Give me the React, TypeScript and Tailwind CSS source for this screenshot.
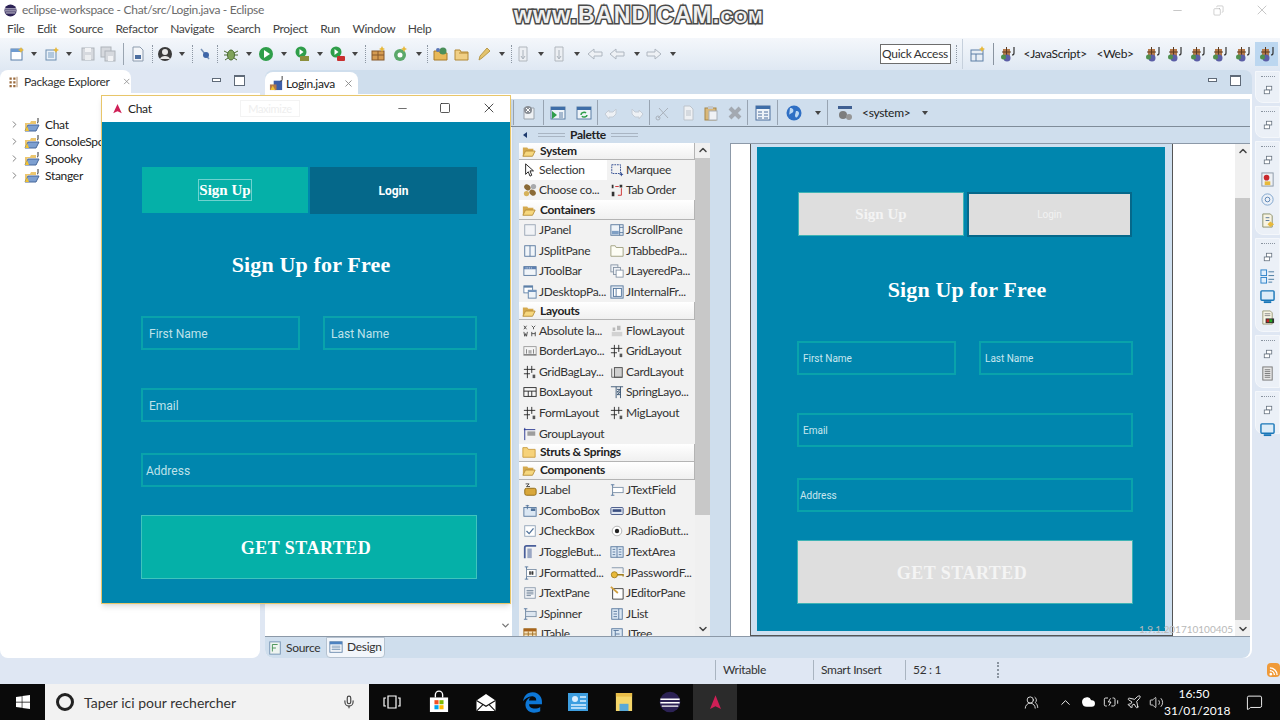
import { ChevronDown, ChevronRight, ChevronUp, Cloud, Mic, Minus, Plane, Square, Volume2, X, MessageSquare, UsersRound, BatteryCharging, Copy } from "lucide-react";
import { FaWindows } from "react-icons/fa";
import { FaEdgeLegacy } from "react-icons/fa6";
import type { ReactNode } from "react";

const menus = ["File", "Edit", "Source", "Refactor", "Navigate", "Search", "Project", "Run", "Window", "Help"];
const packages = ["Chat", "ConsoleSpooky", "Spooky", "Stanger"];

const glyphs: Record<string, ReactNode> = {
  newWin: <><rect x="2" y="3" width="11" height="11" fill="#fff" stroke="#5b7fa8" /><rect x="2" y="3" width="11" height="3" fill="#6f9bd0" /><path d="M12 1l1 2 2 1-2 1-1 2-1-2-2-1 2-1z" fill="#e8b93a" /></>,
  newClass: <><rect x="2" y="4" width="10" height="10" fill="#e8f0f8" stroke="#6d8eb0" /><path d="M4 7h6M4 9h6M4 11h6" stroke="#7aa0c4" /><path d="M12 1l1 2 2 1-2 1-1 2-1-2-2-1 2-1z" fill="#e8b93a" /></>,
  save: <><rect x="2" y="2" width="12" height="12" fill="#d6d9de" stroke="#aeb3ba" /><rect x="5" y="2" width="6" height="4" fill="#f2f3f5" /><rect x="5" y="9" width="6" height="5" fill="#eceef0" /></>,
  saveAll: <><rect x="1" y="1" width="10" height="10" fill="#d6d9de" stroke="#aeb3ba" /><rect x="5" y="5" width="10" height="10" fill="#d6d9de" stroke="#aeb3ba" /><rect x="8" y="10" width="5" height="5" fill="#f2f3f5" /></>,
  binary: <><path d="M3 1h7l3 3v11H3z" fill="#f4f6f9" stroke="#8c9bad" /><path d="M5 9h6v4H5z" fill="#4d6fa0" /></>,
  person: <><circle cx="8" cy="8" r="7" fill="#3a3a3a" /><circle cx="8" cy="6" r="3" fill="#e8e8e8" /><path d="M3 13c1-4 9-4 10 0" fill="#e8e8e8" /></>,
  pin: <><path d="M4 3l8 10" stroke="#7792b8" strokeWidth="1.5" /><circle cx="9" cy="9" r="3" fill="#3e66a8" /></>,
  debug: <><ellipse cx="8" cy="9" rx="3.5" ry="5" fill="#7fa35a" stroke="#4a6b32" /><path d="M1 5l4 2M15 5l-4 2M1 9h3M12 9h3M2 14l3-2M14 14l-3-2" stroke="#4a6b32" /></>,
  run: <><circle cx="8" cy="8" r="7" fill="#2f9e4a" /><path d="M6 4l6 4-6 4z" fill="#fff" /></>,
  coverage: <><circle cx="7" cy="6" r="5.5" fill="#2f9e4a" /><path d="M5.5 3l4 3-4 3z" fill="#fff" /><rect x="6" y="10" width="9" height="5" fill="#8c8f3c" /></>,
  external: <><circle cx="6" cy="6" r="5.5" fill="#2f9e4a" /><path d="M4.5 3l4 3-4 3z" fill="#fff" /><rect x="7" y="10" width="8" height="5" rx="1" fill="#c92f2f" /></>,
  pkg: <><rect x="2" y="5" width="12" height="9" fill="#d59b52" stroke="#86582a" /><path d="M8 5v9M2 9h12" stroke="#86582a" /><path d="M12 0l1 2 2 1-2 1-1 2-1-2-2-1 2-1z" fill="#e8b93a" /></>,
  gearGreen: <><circle cx="8" cy="9" r="6" fill="#5aa86a" /><circle cx="8" cy="9" r="2.5" fill="#fff" /><path d="M12 0l1 2 2 1-2 1-1 2-1-2-2-1 2-1z" fill="#e8b93a" /></>,
  folderRun: <><path d="M1 5h5l1 2h7v7H1z" fill="#e8b959" stroke="#a87a28" /><circle cx="10" cy="5" r="3.5" fill="#4a8f5a" /><circle cx="5" cy="4" r="2" fill="#5b76b5" /></>,
  folderOpen: <><path d="M1 4h5l1 2h7v8H1z" fill="#f0cf85" stroke="#b28834" /><path d="M5 7h9" stroke="#b28834" /></>,
  pencil: <path d="M3 14l1-4 7-8 3 3-8 7z" fill="#e3c36c" stroke="#b99a4a" />,
  nav: <><path d="M4 1h8v14H4z" fill="#eceff3" stroke="#b0b6bd" /><path d="M8 4v8M6 10l2 3 2-3" stroke="#aab2bb" fill="none" /></>,
  back: <path d="M1 8l6-5v3h8v4H7v3z" fill="#eef1f5" stroke="#aeb6c0" />,
  forward: <path d="M15 8L9 3v3H1v4h8v3z" fill="#eef1f5" stroke="#aeb6c0" />,
  undoLight: <path d="M2 9l4-4v2h4l3-3v5l-3 3H6v2z" fill="#eef1f5" stroke="#c4ccd6" />,
  redoLight: <path d="M14 9l-4-4v2H6L3 4v5l3 3h4v2z" fill="#eef1f5" stroke="#c4ccd6" />,
  preview: <><path d="M3 3h10v11H3z" fill="#eef1f4" stroke="#9aa3ad" /><circle cx="7" cy="5" r="4" fill="#8a8f96" /><path d="M5 3l4 4M9 3L5 7" stroke="#fff" /></>,
  greenForm: <><rect x="1" y="2" width="14" height="12" fill="#eef3f8" stroke="#5c7fa6" /><rect x="1" y="2" width="14" height="3" fill="#3f6ea8" /><path d="M2 6l5 4-5 4z" fill="#2f9e4a" /><path d="M9 8h4M9 10h4M9 12h4" stroke="#5c7fa6" /></>,
  refresh: <><rect x="1" y="2" width="14" height="12" fill="#eef3f8" stroke="#5c7fa6" /><rect x="1" y="2" width="14" height="3" fill="#3f6ea8" /><path d="M5 10c0-3 4-3 5-2M11 10c0 2-4 3-5 1" stroke="#2f9e4a" strokeWidth="1.5" fill="none" /></>,
  scissors: <path d="M3 13l10-10M4 3l9 10M3 11a2 2 0 100 4 2 2 0 000-4z" stroke="#aab2bc" fill="none" />,
  copy: <><path d="M4 1h6l3 3v11H4z" fill="#eef0f3" stroke="#bcc3cb" /><path d="M6 6h5M6 8h5M6 10h5" stroke="#bcc3cb" /></>,
  paste: <><rect x="2" y="3" width="11" height="12" fill="#d9b87a" stroke="#a58648" /><rect x="6" y="6" width="8" height="9" fill="#f0f2f5" stroke="#a9b0b8" /><rect x="5" y="1" width="5" height="3" fill="#c3c8ce" /></>,
  del: <path d="M3 3l10 10M13 3L3 13" stroke="#a3a9b1" strokeWidth="4" />,
  props: <><rect x="1" y="1" width="14" height="14" fill="#eef3f8" stroke="#4d6f9e" /><rect x="1" y="1" width="14" height="3" fill="#3f6ea8" /><path d="M3 7h4M9 7h4M3 10h4M9 10h4M3 13h4M9 13h4" stroke="#4d6f9e" /></>,
  globe: <><circle cx="8" cy="8" r="7.5" fill="#2f6fc4" /><path d="M4 3c3 0 4 2 3 4S3 8 3 11M10 6c3 0 4 2 2 5s-3 1-3-1" fill="#bcd7f2" /></>,
  system: <><rect x="1" y="1" width="14" height="3" fill="#3f5f92" /><circle cx="6" cy="10" r="4" fill="#7d7d7d" /><circle cx="12" cy="12" r="3" fill="#969696" /></>,
  perspective: <><rect x="1" y="4" width="12" height="11" fill="#e8eef5" stroke="#5c7fa6" /><path d="M1 8h12M6 8v7" stroke="#5c7fa6" /><path d="M12 0l1 2 2 1-2 1-1 2-1-2-2-1 2-1z" fill="#e8b93a" /></>,
  javaPersp: <><path d="M3 3h7v8H3z" fill="#b5794a" /><path d="M2 6h9M6.5 1v10" stroke="#5a3a20" /><circle cx="7" cy="12" r="3.5" fill="#5b5ea6" /><circle cx="3.5" cy="11" r="2.5" fill="#4f8f4f" /><path d="M14 1v6q0 2-2 2" stroke="#333" fill="none" strokeWidth="1.2" /></>,
  explorer: <><path d="M2 2h3v3H2zM7 2h3v3H7zM2 7h3v3H2zM7 7h3v3H7zM2 12h3v3H2zM7 12h3v3H7z" fill="#9a6a3c" /><path d="M12 1v14" stroke="#9a6a3c" /></>,
  project: <><path d="M1 6h5l1-2h5v3H4l-3 7z" fill="#ecc66e" /><path d="M1 14l3-6h11l-3 6z" fill="#7d9fd0" stroke="#47679a" /><path d="M14 1v4q0 1-1 1" stroke="#333" fill="none" /><path d="M3 9l2 5H1z" fill="#f2c230" /></>,
  javaFile: <><path d="M5 5h9v10H5z" fill="#3f5fa8" /><path d="M1 9h7v6H1z" fill="#b5794a" /><path d="M14 0v4q0 1.500-2 1.500" stroke="#333" fill="none" /><path d="M4 10l2.500 5h-5z" fill="#f2c230" /></>,
  folderOpenY: <><path d="M1 4h5l1 1.500h6V8H4l-3 6z" fill="#d5a94e" /><path d="M1 14l3-6h11l-3 6z" fill="#f6d77e" stroke="#b48a34" /></>,
  folderY: <><path d="M1 3h5l1 2h8v9H1z" fill="#f6d27a" stroke="#c89a3c" /></>,
  cursor: <path d="M3 1v12l3-3 2 5 2-1-2-5h4z" fill="#fff" stroke="#111" />,
  marquee: <><rect x="2" y="2" width="10" height="10" fill="none" stroke="#23408a" strokeDasharray="2 1" /><path d="M13 11v4M11 13h4" stroke="#23408a" /></>,
  chooser: <><ellipse cx="5" cy="5" rx="4" ry="3" fill="#8a6a36" transform="rotate(40 5 5)" /><ellipse cx="11" cy="11" rx="4" ry="3" fill="#8a6a36" transform="rotate(40 11 11)" /><circle cx="12" cy="4" r="3" fill="#a7a9ac" /><circle cx="4" cy="12" r="3" fill="#d6b25a" /></>,
  tabOrder: <><path d="M6 4h4M13 6v8H9" stroke="#c22" fill="none" /><path d="M2 2h2v4H2zM11 2h3v3h-3zM2 10h3v5H2z" fill="#333" /></>,
  panel: <rect x="2" y="2" width="12" height="12" fill="#f1f3f6" stroke="#96a3b3" />,
  scroll: <><rect x="1" y="2" width="14" height="12" fill="#eef3f8" stroke="#52739a" /><path d="M11 2v12M11 5h4M11 11h4" stroke="#52739a" /><rect x="2" y="9" width="8" height="4" fill="#7f9fc4" /></>,
  split: <><rect x="2" y="2" width="12" height="12" fill="#f1f5f9" stroke="#52739a" /><path d="M8 2v12" stroke="#52739a" /></>,
  tabbed: <path d="M1 14V2h5l1 2h8v10z" fill="#fdfdf5" stroke="#9c9c7a" />,
  toolbar: <><rect x="1" y="3" width="14" height="10" fill="#f1f5f9" stroke="#52739a" /><rect x="1" y="3" width="14" height="3" fill="#5d7fb0" /><path d="M3 4.500h8" stroke="#fff" strokeDasharray="1 1" /></>,
  layered: <><rect x="1" y="1" width="8" height="8" fill="#eef1f5" stroke="#8492a3" /><rect x="4" y="4" width="8" height="8" fill="#eef1f5" stroke="#8492a3" /><rect x="7" y="7" width="8" height="8" fill="#fff" stroke="#8492a3" /></>,
  desktop: <><rect x="1" y="1" width="10" height="8" fill="#fff" stroke="#5c7fa6" /><rect x="1" y="1" width="10" height="2" fill="#5c7fa6" /><rect x="6" y="6" width="9" height="9" fill="#eef3f8" stroke="#5c7fa6" /><rect x="6" y="6" width="9" height="2" fill="#6f93bd" /></>,
  internal: <><rect x="1" y="1" width="14" height="14" fill="#dfe7f0" stroke="#52739a" /><rect x="4" y="4" width="9" height="9" fill="#fff" stroke="#52739a" /><path d="M7 4v9" stroke="#52739a" /></>,
  absolute: <><path d="M1 2l3 4M4 2L1 6M10 2l2 2 2-2M12 4v2M1 9l1 5 1-3 1 3 1-5M10 9v5M14 9v5M10 11h4" stroke="#444" fill="none" /></>,
  flow: <><rect x="3" y="4" width="3" height="4" fill="#bbb" /><rect x="8" y="2" width="4" height="5" fill="#bbb" /><rect x="2" y="9" width="12" height="5" fill="#d2d2d2" /></>,
  border: <><rect x="1" y="3" width="14" height="10" fill="#f4f4f4" stroke="#999" /><path d="M4 6v5M12 6v5M1 12h14M7 7v4M9 7v4" stroke="#777" /></>,
  gridA: <><path d="M5 1v14M10 1v8M1 5h13M1 10h7" stroke="#222" /><path d="M11 11h3v4h-3z" fill="#555" /></>,
  card: <><rect x="5" y="3" width="9" height="11" fill="#cfcfcf" stroke="#444" /><path d="M2 14h12M2 4v10" stroke="#555" /></>,
  box: <><rect x="1" y="3" width="14" height="10" fill="#f7f7f7" stroke="#222" /><path d="M1 7h14M6 7v6M10 7v6" stroke="#222" /></>,
  spring: <><path d="M1 2h14M7 2v13M12 2v13" stroke="#35506f" /><path d="M8 5h4l-4 3h4l-4 3h4" stroke="#35506f" fill="none" /></>,
  group: <><path d="M2 1v14M1 3h13" stroke="#1c2c8c" /><rect x="5" y="5" width="9" height="5" fill="#9d9d9d" /></>,
  label: <><rect x="2" y="6" width="13" height="8" rx="2" fill="#d9a73b" stroke="#8a6510" /><path d="M3 1h4L4 4h4" stroke="#444" fill="none" /></>,
  textField: <><path d="M3 2v12M1 2h4M1 14h4" stroke="#52739a" /><rect x="3" y="5" width="12" height="6" fill="#fff" stroke="#7a8fa6" /></>,
  combo: <><rect x="1" y="4" width="14" height="10" fill="#dbe7f3" stroke="#52739a" /><path d="M5 1v5M3 2h4" stroke="#52739a" /><rect x="9" y="5" width="5" height="3" fill="#52739a" /></>,
  button: <><rect x="1" y="4" width="14" height="8" rx="1" fill="#dfe6f1" stroke="#3b4f80" /><rect x="3" y="6" width="10" height="3" fill="#3b4f80" /></>,
  check: <><rect x="2" y="2" width="12" height="12" fill="#fff" stroke="#8da0b5" /><path d="M4 8l3 3 5-6" stroke="#52739a" strokeWidth="1.500" fill="none" /></>,
  radio: <><circle cx="8" cy="8" r="5.500" fill="#fff" stroke="#aaa" /><circle cx="8" cy="8" r="2.500" fill="#222" /></>,
  toggle: <><path d="M2 15V3q0-2 2-2h11" stroke="#4a5f9a" fill="none" strokeWidth="2" /><rect x="5" y="4" width="5" height="11" fill="#9aa7c4" /></>,
  area: <><rect x="1" y="2" width="14" height="12" fill="#dbe7f3" stroke="#52739a" /><path d="M8 2v12M3 5h3M10 5h3M3 8h3M10 8h3M3 11h3M10 11h3" stroke="#52739a" /></>,
  formatted: <><path d="M4 1v14M2 1h4M2 15h4" stroke="#52739a" /><rect x="4" y="4" width="11" height="8" fill="#fff" stroke="#7a8fa6" /><path d="M8 6v4M11 6v4M7 7h5M7 9h5" stroke="#222" /></>,
  password: <><circle cx="5" cy="10" r="3.500" fill="#e8b93a" stroke="#a07d1a" /><path d="M8 10h7v2" stroke="#a07d1a" strokeWidth="1.500" fill="none" /><path d="M2 2h13v6" stroke="#7a8fa6" fill="none" /></>,
  textPane: <><rect x="2" y="2" width="12" height="12" fill="#f5f7fa" stroke="#8797a9" /><path d="M4 5h8M4 7h8M4 9h8M4 11h5" stroke="#667a90" /></>,
  editor: <><path d="M3 3h12v12H3z" fill="#fff" stroke="#333" /><path d="M1 1l8 7" stroke="#d0a040" strokeWidth="2" /></>,
  spinner: <><path d="M3 2v12M1 2h4M1 14h4" stroke="#52739a" /><rect x="3" y="5" width="12" height="6" fill="#dde6f0" stroke="#7a8fa6" /></>,
  list: <><rect x="2" y="2" width="12" height="12" fill="#dbe7f3" stroke="#52739a" /><path d="M10 2v12M4 5h4M4 8h4M4 11h4" stroke="#52739a" /></>,
  table: <><rect x="1" y="2" width="14" height="12" fill="#f5e3be" stroke="#a06b1f" /><rect x="1" y="2" width="14" height="3" fill="#a9641c" /><path d="M1 8h14M6 5v9M11 5v9" stroke="#a06b1f" /></>,
  tree: <><rect x="2" y="2" width="12" height="12" fill="#dbe7f3" stroke="#52739a" /><path d="M4 4h6M6 4v7h5M6 8h5" stroke="#52739a" fill="none" /></>,
  source: <><rect x="2" y="1" width="12" height="14" fill="#eef4f0" stroke="#6d8eb0" /><path d="M5 4h6M5 4v8M5 8h4" stroke="#3a8a4a" fill="none" /></>,
  design: <><rect x="1" y="2" width="14" height="12" fill="#fff" stroke="#5c7fa6" /><rect x="1" y="2" width="14" height="3" fill="#4d82c0" /><path d="M3 7h10M3 9h10M3 11h10" stroke="#6d8eb0" /></>,
  restore: <><rect x="6" y="3" width="7" height="5" fill="#fff" stroke="#5f6a78" /><rect x="3" y="8" width="7" height="5" fill="#fff" stroke="#5f6a78" /></>,
  problems: <><rect x="2" y="1" width="12" height="14" fill="#eef1f5" stroke="#8a97a6" /><circle cx="7" cy="6" r="3" fill="#c9282d" /><rect x="5" y="10" width="6" height="4" fill="#e8b93a" /></>,
  at: <><circle cx="8" cy="8" r="6" fill="none" stroke="#7da3cc" /><circle cx="8" cy="8" r="2.500" fill="none" stroke="#5b84b3" /></>,
  outline: <><path d="M3 1h8l2 2v12H3z" fill="#f7f3e2" stroke="#8a8f6a" /><path d="M6 5h4M6 8h4" stroke="#52739a" /><path d="M8 12l3-3 4 3-4 3z" fill="#e8b93a" /></>,
  hierarchy: <><rect x="1" y="1" width="6" height="6" fill="#dfeefc" stroke="#2a80c8" /><rect x="1" y="9" width="6" height="6" fill="#dfeefc" stroke="#2a80c8" /><path d="M9 3h6M9 7h6M9 11h6M9 14h4" stroke="#46789f" /></>,
  monitor: <><rect x="1" y="2" width="14" height="10" rx="1" fill="#dcecf8" stroke="#1876b8" strokeWidth="1.500" /><path d="M4 14h8" stroke="#1876b8" strokeWidth="2" /></>,
  console: <><path d="M3 1h8l2 2v12H3z" fill="#f7f5e5" stroke="#9a9a7a" /><path d="M5 4h6M5 6h6" stroke="#888" /><rect x="6" y="9" width="9" height="5" fill="#333" /><rect x="7" y="10" width="3" height="3" fill="#c22" /><rect x="10" y="10" width="3" height="3" fill="#2a2" /></>,
  server: <><rect x="3" y="1" width="10" height="14" fill="#e8e8e8" stroke="#777" /><path d="M5 4h6M5 6h6M5 8h6M5 10h6M5 12h6" stroke="#777" /></>,
};

function Icon({ name, className = "w-4 h-4" }: { name: string; className?: string }) {
  return (
    <svg viewBox="0 0 16 16" className={`${className} shrink-0`}>
      {glyphs[name]}
    </svg>
  );
}

function Caret() {
  return <span className="block w-0 h-0 border-x-[3.5px] border-x-transparent border-t-[4px] border-t-[#444]" />;
}

function Dots() {
  return <span className="h-[18px] border-l border-dotted border-[#8d97a3]" />;
}

function ToolCell({ w, children }: { w: string; children: ReactNode }) {
  return <div className={`${w} flex items-center justify-center shrink-0`}>{children}</div>;
}

function EclipseLogo({ className }: { className: string }) {
  return (
    <svg viewBox="0 0 16 16" className={className}>
      <circle cx="8" cy="8" r="7.500" fill="#2c2255" />
      <path d="M1 6h14M1 8.500h14M2 11h12" stroke="#fff" strokeWidth="1" />
    </svg>
  );
}

function MainToolbar() {
  return (
    <div className="h-[32px] flex items-center bg-gradient-to-b from-[#f4f7fb] to-[#dfe8f3] pl-[8px] shrink-0">
      <ToolCell w="w-[17px]"><Icon name="newWin" /></ToolCell>
      <ToolCell w="w-[18px]"><Caret /></ToolCell>
      <ToolCell w="w-[17px]"><Icon name="newClass" /></ToolCell>
      <ToolCell w="w-[18px]"><Caret /></ToolCell>
      <ToolCell w="w-[19px]"><Icon name="save" /></ToolCell>
      <ToolCell w="w-[22px]"><Icon name="saveAll" /></ToolCell>
      <ToolCell w="w-[8px]"><span className="h-[22px] border-l border-[#9aa5b1]" /></ToolCell>
      <ToolCell w="w-[21px]"><Icon name="binary" /></ToolCell>
      <ToolCell w="w-[8px]"><Dots /></ToolCell>
      <ToolCell w="w-[18px]"><Icon name="person" /></ToolCell>
      <ToolCell w="w-[15px]"><Caret /></ToolCell>
      <ToolCell w="w-[6px]"><Dots /></ToolCell>
      <ToolCell w="w-[19px]"><Icon name="pin" /></ToolCell>
      <ToolCell w="w-[6px]"><Dots /></ToolCell>
      <ToolCell w="w-[22px]"><Icon name="debug" /></ToolCell>
      <ToolCell w="w-[14px]"><Caret /></ToolCell>
      <ToolCell w="w-[20px]"><Icon name="run" /></ToolCell>
      <ToolCell w="w-[16px]"><Caret /></ToolCell>
      <ToolCell w="w-[19px]"><Icon name="coverage" /></ToolCell>
      <ToolCell w="w-[17px]"><Caret /></ToolCell>
      <ToolCell w="w-[19px]"><Icon name="external" /></ToolCell>
      <ToolCell w="w-[15px]"><Caret /></ToolCell>
      <ToolCell w="w-[6px]"><Dots /></ToolCell>
      <ToolCell w="w-[20px]"><Icon name="pkg" /></ToolCell>
      <ToolCell w="w-[24px]"><Icon name="gearGreen" /></ToolCell>
      <ToolCell w="w-[13px]"><Caret /></ToolCell>
      <ToolCell w="w-[5px]"><Dots /></ToolCell>
      <ToolCell w="w-[21px]"><Icon name="folderRun" /></ToolCell>
      <ToolCell w="w-[22px]"><Icon name="folderOpen" /></ToolCell>
      <ToolCell w="w-[22px]"><Icon name="pencil" /></ToolCell>
      <ToolCell w="w-[13px]"><Caret /></ToolCell>
      <ToolCell w="w-[6px]"><Dots /></ToolCell>
      <ToolCell w="w-[18px]"><Icon name="nav" /></ToolCell>
      <ToolCell w="w-[18px]"><Caret /></ToolCell>
      <ToolCell w="w-[18px]"><Icon name="nav" /></ToolCell>
      <ToolCell w="w-[18px]"><Caret /></ToolCell>
      <ToolCell w="w-[18px]"><Icon name="back" /></ToolCell>
      <ToolCell w="w-[26px]"><Icon name="back" /></ToolCell>
      <ToolCell w="w-[14px]"><Caret /></ToolCell>
      <ToolCell w="w-[20px]"><Icon name="forward" /></ToolCell>
      <ToolCell w="w-[18px]"><Caret /></ToolCell>

      <div className="ml-auto flex items-center h-full">
        <div className="w-[71px] h-[20px] border border-[#6d6d6d] bg-white flex items-center justify-center text-[12px] text-[#333]">Quick Access</div>
        <ToolCell w="w-[11px]"><Dots /></ToolCell>
        <span className="h-[30px] border-l border-[#c6d0dc]" />
        <ToolCell w="w-[30px]"><Icon name="perspective" /></ToolCell>
        <span className="h-[22px] border-l border-[#8a94a0]" />
        <ToolCell w="w-[28px]"><Icon name="javaPersp" /></ToolCell>
        <span className="ml-[2px] w-[73px] text-[12px] text-[#222]">&lt;JavaScript&gt;</span>
        <span className="w-[45px] text-[12px] text-[#222]">&lt;Web&gt;</span>
        {[0, 1, 2, 3, 4].map(i => (
          <ToolCell key={i} w="w-[22.500px]"><Icon name="javaPersp" /></ToolCell>
        ))}
        <div className="w-[23px] h-[24px] ml-[1px] mr-[2px] bg-[#bcd7f0] flex items-center justify-center"><Icon name="javaPersp" /></div>
      </div>
    </div>
  );
}

function PackageExplorer() {
  return (
    <div className="w-[260px] mr-[5px] shrink-0 flex flex-col">
      <div className="h-[23px] flex items-center shrink-0">
        <div className="w-[131px] h-full rounded-t-lg bg-white flex items-center pl-[8px] gap-[4px] text-[12px] text-[#333]">
          <Icon name="explorer" className="w-[12px] h-[12px]" />
          <span>Package Explorer</span>
          <X className="w-[11px] h-[11px] ml-[8px] text-[#8a8a8a]" />
        </div>
        <span className="ml-[81px] mb-[3px] w-[9px] h-[4px] border border-[#5f6a78] bg-white" />
        <span className="ml-[13px] mb-[3px] w-[11px] h-[11px] border border-[#5f6a78] border-t-2 bg-white" />
      </div>
      <div className="flex-1 bg-white rounded-b-lg pt-[23px] pl-[9px]">
        {packages.map(p => (
          <div key={p} className="h-[17px] flex items-center text-[12px] text-[#222]">
            <ChevronRight className="w-[11px] h-[11px] text-[#777]" />
            <Icon name="project" className="w-[16px] h-[16px] ml-[4px]" />
            <span className="ml-[5px]">{p}</span>
          </div>
        ))}
      </div>
    </div>
  );
}

function Sep() {
  return <span className="h-[25px] border-l border-[#98a4b2]" />;
}

function EditorToolbar() {
  return (
    <div className="h-[28px] bg-[#cfdeed] border-b border-[#7f8c99] flex items-center pl-[248px] shrink-0">
      <Sep />
      <ToolCell w="w-[29px]"><Icon name="preview" /></ToolCell>
      <Sep />
      <ToolCell w="w-[27px]"><Icon name="greenForm" /></ToolCell>
      <ToolCell w="w-[26px]"><Icon name="refresh" /></ToolCell>
      <Sep />
      <ToolCell w="w-[26px]"><Icon name="undoLight" /></ToolCell>
      <ToolCell w="w-[25px]"><Icon name="redoLight" /></ToolCell>
      <Sep />
      <ToolCell w="w-[26px]"><Icon name="scissors" /></ToolCell>
      <ToolCell w="w-[23px]"><Icon name="copy" /></ToolCell>
      <ToolCell w="w-[23px]"><Icon name="paste" /></ToolCell>
      <ToolCell w="w-[25px]"><Icon name="del" /></ToolCell>
      <Sep />
      <ToolCell w="w-[29px]"><Icon name="props" /></ToolCell>
      <Sep />
      <ToolCell w="w-[31px]"><Icon name="globe" /></ToolCell>
      <ToolCell w="w-[18px]"><Caret /></ToolCell>
      <Sep />
      <ToolCell w="w-[34px]"><Icon name="system" /></ToolCell>
      <span className="w-[60px] text-[12px] text-[#222]">&lt;system&gt;</span>
      <Caret />
    </div>
  );
}

const PaletteHeader = ({ label, h, closed }: { label: string; h: string; closed?: boolean }) => (
  <div className={`${h} flex items-center pl-[3px] gap-[4px] bg-gradient-to-b from-[#ffffff] to-[#f0f0f0] border-b border-[#b4b4b4] border-r text-[12px] font-bold text-[#222]`}>
    <Icon name={closed ? "folderY" : "folderOpenY"} className="w-[14px] h-[14px]" />
    <span>{label}</span>
  </div>
);

function PaletteRows({ rows }: { rows: [string, string, string?, string?][] }) {
  return (
    <div className="grid grid-cols-[88px_88px] auto-rows-[20.600px]">
      {rows.map(([i1, t1, i2, t2]) => (
        <div key={t1} className="contents">
          <div className="flex items-center pl-[4px] gap-[2px] text-[12px] text-[#333] whitespace-nowrap">
            <Icon name={i1} className="w-[14px] h-[14px]" />
            <span>{t1}</span>
          </div>
          <div className="flex items-center pl-[3px] gap-[2px] text-[12px] text-[#333] whitespace-nowrap">
            {i2 && <Icon name={i2} className="w-[14px] h-[14px]" />}
            <span>{t2}</span>
          </div>
        </div>
      ))}
    </div>
  );
}

function Palette() {
  return (
    <div className="w-[193px] shrink-0 flex flex-col">
      <div className="h-[16px] flex items-center shrink-0 text-[12px] font-bold text-[#222]">
        <span className="ml-[4px] w-0 h-0 border-y-[3px] border-y-transparent border-r-[4px] border-r-[#1d3a6d]" />
        <span className="ml-[11px] w-[27px] h-[4px] border-y border-[#a9b5c3]" />
        <span className="ml-[5px]">Palette</span>
        <span className="ml-[5px] w-[27px] h-[4px] border-y border-[#a9b5c3]" />
      </div>
      <div className="flex-1 flex min-h-0 overflow-hidden">
        <div className="w-[176px] bg-[#f2f2f2] shrink-0 overflow-hidden">
          <PaletteHeader label="System" h="h-[17px]" />
          <div className="grid grid-cols-[88px_88px] auto-rows-[20px]">
            <div className="flex items-center pl-[4px] gap-[2px] bg-white text-[12px] text-[#333]">
              <Icon name="cursor" className="w-[14px] h-[14px]" />
              <span>Selection</span>
            </div>
            <div className="flex items-center pl-[3px] gap-[2px] text-[12px] text-[#333]">
              <Icon name="marquee" className="w-[14px] h-[14px]" />
              <span>Marquee</span>
            </div>
            <div className="flex items-center pl-[4px] gap-[2px] text-[12px] text-[#333] whitespace-nowrap">
              <Icon name="chooser" className="w-[14px] h-[14px]" />
              <span>Choose co...</span>
            </div>
            <div className="flex items-center pl-[3px] gap-[2px] text-[12px] text-[#333]">
              <Icon name="tabOrder" className="w-[14px] h-[14px]" />
              <span>Tab Order</span>
            </div>
          </div>
          <PaletteHeader label="Containers" h="h-[20px]" />
          <PaletteRows rows={[
            ["panel", "JPanel", "scroll", "JScrollPane"],
            ["split", "JSplitPane", "tabbed", "JTabbedPa..."],
            ["toolbar", "JToolBar", "layered", "JLayeredPa..."],
            ["desktop", "JDesktopPa...", "internal", "JInternalFr..."],
          ]} />
          <PaletteHeader label="Layouts" h="h-[18px]" />
          <PaletteRows rows={[
            ["absolute", "Absolute la...", "flow", "FlowLayout"],
            ["border", "BorderLayo...", "gridA", "GridLayout"],
            ["gridA", "GridBagLay...", "card", "CardLayout"],
            ["box", "BoxLayout", "spring", "SpringLayo..."],
            ["gridA", "FormLayout", "gridA", "MigLayout"],
            ["group", "GroupLayout"],
          ]} />
          <PaletteHeader label="Struts & Springs" h="h-[18px]" closed />
          <PaletteHeader label="Components" h="h-[18px]" />
          <PaletteRows rows={[
            ["label", "JLabel", "textField", "JTextField"],
            ["combo", "JComboBox", "button", "JButton"],
            ["check", "JCheckBox", "radio", "JRadioButt..."],
            ["toggle", "JToggleBut...", "area", "JTextArea"],
            ["formatted", "JFormatted...", "password", "JPasswordF..."],
            ["textPane", "JTextPane", "editor", "JEditorPane"],
            ["spinner", "JSpinner", "list", "JList"],
            ["table", "JTable", "tree", "JTree"],
          ]} />
        </div>
        <Scrollbar thumb="h-[357px]" />
        <div className="flex-1" />
      </div>
    </div>
  );
}

function Scrollbar({ thumb }: { thumb: string }) {
  return (
    <div className="w-[15px] shrink-0 bg-[#f0f0f0] flex flex-col items-center">
      <ChevronUp className="w-[12px] h-[14px] shrink-0 text-[#444]" strokeWidth={3} />
      <div className={`w-full bg-[#c8c8c8] mt-[1px] ${thumb}`} />
      <ChevronDown className="w-[12px] h-[14px] shrink-0 mt-auto text-[#444]" strokeWidth={3} />
    </div>
  );
}

function SignUpForm({ preview }: { preview?: boolean }) {
  const fieldText = preview ? "text-[10px] text-[#c9e6ee]" : "text-[12px] text-[#bfe2ea] pt-[1px]";
  const firstPad = preview ? "pl-[4px]" : "pl-[6px]";
  const addressPad = preview ? "pl-[1px]" : "pl-[3px]";
  const tabSign = preview ? "bg-[#dedede] border border-[#3fb3b5] w-[166px] h-[44px] mr-[3px] ml-[1px]" : "bg-[#05b0a8] w-[166px] h-[46px] mr-[2px] ml-[1px]";
  const tabLogin = preview ? "bg-[#dedede] border-2 border-[#05688a] text-[#f2f2f2] font-normal text-[10px] w-[165px] h-[45px]" : "bg-[#05688a] text-white font-bold text-[12px] w-[167px] h-[47px]";
  return (
    <div className={`w-[408px] h-full bg-[#0086ae] pt-[45px] tracking-normal font-['Roboto',sans-serif] ${preview ? "pl-[40px]" : "pl-[39px]"}`}>
      <div className="flex w-[336px] h-[46px]">
        <div className={`${tabSign} flex items-center justify-center font-['Liberation_Serif',serif] font-bold text-[15px] ${preview ? "text-[#f4f4f4]" : "text-white"}`}>
          <span className={preview ? "" : "h-[22px] leading-[21px] border border-[#6fd2cf]"}>Sign Up</span>
        </div>
        <div className={`${tabLogin} flex items-center justify-center`}>Login</div>
      </div>
      <h2 className="mt-[37px] h-[30px] w-[336px] pl-[4px] text-center font-['Liberation_Serif',serif] font-bold text-[22px] leading-[30px] tracking-[0.150px] text-white">Sign Up for Free</h2>
      <div className="mt-[36px] flex w-[336px] justify-between">
        <div className={`w-[159px] h-[34px] border-2 border-[#09a3ab] flex items-center ${firstPad} ${fieldText}`}>First Name</div>
        <div className={`w-[154px] h-[34px] border-2 border-[#09a3ab] flex items-center ${firstPad} ${fieldText}`}>Last Name</div>
      </div>
      <div className={`mt-[38px] w-[336px] h-[34px] border-2 border-[#09a3ab] flex items-center ${firstPad} ${fieldText}`}>Email</div>
      <div className={`mt-[31px] w-[336px] h-[34px] border-2 border-[#09a3ab] flex items-center ${addressPad} ${fieldText}`}>Address</div>
      <div className={`mt-[28px] w-[336px] h-[64px] pr-[6px] pt-[3px] tracking-[0.500px] flex items-center justify-center font-['Liberation_Serif',serif] font-bold text-[18px] ${preview ? "bg-[#dedede] border border-[#3fb3b5] text-[#f4f4f4]" : "bg-[#05b0a8] border border-[#3fc4bd] text-white"}`}>GET STARTED</div>
    </div>
  );
}

function DesignCanvas() {
  return (
    <div className="flex-1 flex flex-col min-w-0">
      <div className="h-[16px] shrink-0" />
      <div className="flex-1 bg-white border-t border-l border-[#8c99a8] flex min-h-0">
        <div className="w-[19px] shrink-0" />
        <div className="w-[423px] shrink-0 bg-[#cfe0f0] border-x border-b border-[#555] pl-[6px] pt-[3px] pb-[4px]">
          <SignUpForm preview />
        </div>
        <div className="flex-1" />
        <Scrollbar thumb="h-[422px] mt-[40px]" />
      </div>
    </div>
  );
}

function Editor() {
  return (
    <div className="w-[987px] shrink-0 flex flex-col">
      <div className="h-[24px] bg-[#cfdeed] rounded-t-lg flex items-end shrink-0 relative">
        <div className="w-[93px] h-[23px] bg-white rounded-t-lg flex items-center pl-[4px] gap-[2px] text-[12px] text-[#222] mb-[-1px]">
          <Icon name="javaFile" className="w-[15px] h-[15px]" />
          <span>Login.java</span>
          <X className="w-[11px] h-[11px] ml-[6px] text-[#8a8a8a]" />
        </div>
        <span className="ml-[850px] mb-[12px] w-[9px] h-[4px] border border-[#5f6a78] bg-white" />
        <span className="ml-[13px] mb-[8px] w-[11px] h-[11px] border border-[#5f6a78] border-t-2 bg-white" />
      </div>
      <div className="flex-1 bg-white flex flex-col pt-[5px] pr-[2px] rounded-b-lg min-h-0">
        <EditorToolbar />
        <div className="flex-1 flex bg-[#cfdeed] min-h-0">
          <div className="w-[247px] shrink-0 bg-white flex flex-col items-end pr-[1px] justify-end pb-[5px]">
            <ChevronDown className="w-[11px] h-[11px] text-[#777]" strokeWidth={3} />
          </div>
          <div className="w-[7px] shrink-0" />
          <Palette />
          <div className="w-[18px] shrink-0" />
          <DesignCanvas />
        </div>
        <div className="h-[22px] bg-[#cfdeed] border-t border-[#8c99a8] flex items-center pl-[3px] text-[12px] text-[#333] shrink-0 rounded-b-lg">
          <div className="w-[58px] flex items-center gap-[4px]">
            <Icon name="source" className="w-[14px] h-[14px]" />
            <span>Source</span>
          </div>
          <div className="w-[59px] h-[21px] mt-[-1px] bg-[#f2f6fb] border border-[#b5c2d0] rounded-b flex items-center gap-[4px] pl-[2px]">
            <Icon name="design" className="w-[14px] h-[14px]" />
            <span>Design</span>
          </div>
        </div>
      </div>
    </div>
  );
}

function TrimGroup({ h, icons }: { h: string; icons: string[] }) {
  return (
    <div className={`${h} w-full bg-[#ebf0f7] border border-[#f4f7fb] rounded-bl-lg flex flex-col items-center pt-[4px]`}>
      <span className="w-[14px] border-t border-dotted border-[#8a94a0]" />
      <div className="mt-[7px] flex flex-col items-center gap-[5.500px]">
        <Icon name="restore" className="w-[12px] h-[12px]" />
        {icons.map((n, i) => (
          <Icon key={i} name={n} className="w-[15px] h-[15px]" />
        ))}
      </div>
    </div>
  );
}

function RightTrim() {
  return (
    <div className="w-[25px] ml-[3px] shrink-0 flex flex-col gap-[3px] pt-[1px]">
      <TrimGroup h="h-[32px]" icons={[]} />
      <TrimGroup h="h-[32px]" icons={[]} />
      <TrimGroup h="h-[94px]" icons={["problems", "at", "outline"]} />
      <TrimGroup h="h-[94px]" icons={["hierarchy", "monitor", "console"]} />
      <TrimGroup h="h-[53px]" icons={["server"]} />
      <TrimGroup h="h-[43px]" icons={["monitor"]} />
    </div>
  );
}

function StatusBar() {
  return (
    <div className="h-[26px] pb-[2px] flex items-center text-[12px] text-[#333] shrink-0">
      <span className="ml-[715px] h-[20px] border-l border-[#a9b4c0]" />
      <span className="ml-[7px] w-[90px]">Writable</span>
      <span className="h-[20px] border-l border-[#a9b4c0]" />
      <span className="ml-[7px] w-[84px]">Smart Insert</span>
      <span className="h-[20px] border-l border-[#a9b4c0]" />
      <span className="ml-[7px] w-[84px]">52 : 1</span>
      <span className="h-[16px] border-l-2 border-dotted border-[#8a94a0]" />
      <div className="ml-auto w-[13px] h-[14px] rounded-sm bg-[#f09a38] flex items-end pl-[2px] pb-[1px]">
        <svg viewBox="0 0 10 10" className="w-[9px] h-[9px]">
          <circle cx="2" cy="8" r="1.500" fill="#fff" />
          <path d="M1 4a5 5 0 015 5M1 1a8 8 0 018 8" stroke="#fff" fill="none" strokeWidth="1.500" />
        </svg>
      </div>
    </div>
  );
}

function Taskbar() {
  return (
    <div className="h-[36px] bg-[#0a0a0a] flex items-center shrink-0 text-white tracking-normal">
      <div className="w-[45px] flex justify-center"><FaWindows className="w-[16px] h-[16px]" /></div>
      <div className="w-[324px] h-full bg-[#f2f2f2] flex items-center pl-[11px]">
        <span className="w-[18px] h-[18px] rounded-full border-[3px] border-[#222]" />
        <span className="ml-[10px] text-[14px] text-[#333]">Taper ici pour rechercher</span>
        <Mic className="ml-auto mr-[13px] w-[14px] h-[18px] text-[#444]" />
      </div>
      <ToolCell w="w-[46px]">
        <svg viewBox="0 0 18 16" className="w-[18px] h-[16px]">
          <path d="M5 2h8v12H5zM3 4H1v8h2M15 4h2v8h-2" stroke="#fff" fill="none" strokeWidth="1.200" />
        </svg>
      </ToolCell>
      <ToolCell w="w-[47px]">
        <svg viewBox="0 0 22 24" className="w-[20px] h-[24px]">
          <path d="M1 7h20v16H1z" fill="#fff" />
          <path d="M7 7V4a4 4 0 018 0v3" stroke="#fff" fill="none" strokeWidth="1.500" />
          <rect x="6" y="10" width="4.500" height="4.500" fill="#f25022" />
          <rect x="11.500" y="10" width="4.500" height="4.500" fill="#7fba00" />
          <rect x="6" y="15.500" width="4.500" height="4.500" fill="#00a4ef" />
          <rect x="11.500" y="15.500" width="4.500" height="4.500" fill="#ffb900" />
        </svg>
      </ToolCell>
      <ToolCell w="w-[47px]">
        <svg viewBox="0 0 22 20" className="w-[22px] h-[19px]">
          <path d="M1 8l10-7 10 7v11H1z" fill="#fff" />
          <path d="M1 8l10 6 10-6M1 19l7-7M21 19l-7-7" stroke="#111" fill="none" strokeWidth="1.200" />
        </svg>
      </ToolCell>
      <ToolCell w="w-[46px]"><FaEdgeLegacy className="w-[21px] h-[21px] text-[#0d77d6]" /></ToolCell>
      <ToolCell w="w-[46px]">
        <svg viewBox="0 0 20 18" className="w-[20px] h-[18px]">
          <rect width="20" height="18" fill="#3d9ee0" />
          <circle cx="7" cy="6" r="3" fill="#dcefff" />
          <path d="M12 4h6M12 8h6M3 12h15M3 15h15" stroke="#dcefff" strokeWidth="1.500" />
        </svg>
      </ToolCell>
      <ToolCell w="w-[46px]">
        <svg viewBox="0 0 20 22" className="w-[18px] h-[22px]">
          <path d="M1 1h18v20H1z" fill="#f4d66a" />
          <path d="M1 1h18v4H1z" fill="#e8bd48" />
          <path d="M5 13h10v8H5z" fill="#58a9d8" />
        </svg>
      </ToolCell>
      <ToolCell w="w-[46px]"><EclipseLogo className="w-[22px] h-[22px]" /></ToolCell>
      <div className="w-[44px] h-full bg-[#2b2b2b] flex items-center justify-center">
        <svg viewBox="0 0 12 16" className="w-[11px] h-[15px]"><path d="M6 0l6 15-6-3-6 3z" fill="#cf1f56" /></svg>
      </div>
      <div className="ml-auto flex items-center h-full">
        <UsersRound className="w-[15px] h-[15px] mr-[19px]" strokeWidth={1.300} />
        <ChevronUp className="w-[15px] h-[15px] mr-[7px]" strokeWidth={1.500} />
        <Cloud className="w-[17px] h-[14px] mr-[6px] fill-white" />
        <BatteryCharging className="w-[16px] h-[16px] mr-[7px]" strokeWidth={1.300} />
        <Plane className="w-[16px] h-[16px] mr-[7px]" strokeWidth={1.300} />
        <Volume2 className="w-[15px] h-[15px]" strokeWidth={1.300} />
        <div className="w-[60px] text-center text-[12px] leading-[17px]">
          <div>16:50</div>
          <div>31/01/2018</div>
        </div>
        <MessageSquare className="ml-[22px] mr-[17px] w-[17px] h-[17px]" strokeWidth={1.300} />
      </div>
    </div>
  );
}

function ChatWindow() {
  return (
    <div className="absolute left-[101px] top-[95px] w-[410px] h-[509px] border border-[#e8c66a] bg-white flex flex-col shadow-md">
      <div className="h-[26px] shrink-0 flex items-center relative text-[12px] text-[#222]">
        <svg viewBox="0 0 12 14" className="ml-[11px] w-[9px] h-[10px]"><path d="M6 0l6 13-6-3-6 3z" fill="#cf1f56" /></svg>
        <span className="ml-[6px]">Chat</span>
        <span className="absolute left-[138px] top-[4px] w-[60px] h-[17px] border border-[#f3f3f3] text-[11px] text-center text-[#eeeeee]">Maximize</span>
        <Minus className="absolute left-[294px] top-[6px] w-[13px] h-[13px]" strokeWidth={1.200} />
        <Square className="absolute left-[337px] top-[6px] w-[12px] h-[12px]" strokeWidth={1.500} />
        <X className="absolute left-[379px] top-[4px] w-[16px] h-[16px]" strokeWidth={1.200} />
      </div>
      <div className="flex-1 min-h-0"><SignUpForm /></div>
    </div>
  );
}

export default function App() {
  return (
    <div className="relative w-[1280px] h-[720px] overflow-hidden flex flex-col bg-[#dfe7f3] whitespace-nowrap tracking-[-0.300px] font-['Lato',sans-serif]">
      <div className="h-[20px] bg-white flex items-center shrink-0 text-[12px] text-[#6b6b6b] pl-[4px]">
        <EclipseLogo className="w-[13px] h-[13px]" />
        <span className="ml-[5px]">eclipse-workspace - Chat/src/Login.java - Eclipse</span>
        <Minus className="ml-auto w-[13px] h-[13px] text-[#aaa]" strokeWidth={1.200} />
        <Copy className="ml-[29px] w-[11px] h-[11px] text-[#aaa] -scale-x-100" strokeWidth={1.200} />
        <X className="ml-[30px] mr-[10px] w-[16px] h-[16px] text-[#aaa]" strokeWidth={1} />
      </div>
      <div className="h-[18px] bg-white flex items-center shrink-0 pl-[7px] text-[12px] text-[#444] gap-[12.400px]">
        {menus.map(m => <span key={m}>{m}</span>)}
      </div>
      <MainToolbar />
      <div className="h-[588px] flex shrink-0">
        <PackageExplorer />
        <Editor />
        <RightTrim />
      </div>
      <StatusBar />
      <Taskbar />
      <ChatWindow />
      <div className="absolute left-[514px] top-[1px] text-[23px] leading-[28px] font-bold font-['Liberation_Sans',sans-serif] text-[#f0f0f0] [-webkit-text-stroke:3px_#4a4a4a] tracking-[1.200px] [paint-order:stroke_fill]">
        www.BANDICAM.<span className="text-[17px]">COM</span>
      </div>
      <div className="absolute left-[1139px] top-[622px] text-[10px] tracking-normal text-[#b9b9b9]">1.9.1.201710100405</div>
    </div>
  );
}
